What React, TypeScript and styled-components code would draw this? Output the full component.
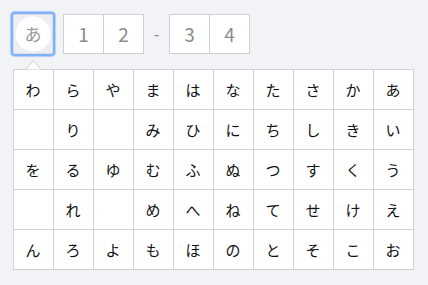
import React from "react";
import styled, { createGlobalStyle } from "styled-components";

const Global = createGlobalStyle`
  html, body { margin: 0; padding: 0; background: #f2f3f7; }
  body { font-family: "Noto Sans CJK JP", "Noto Sans", sans-serif; }
`;

const Page = styled.div`
  padding: 14px 0 0 13px;
  display: flex;
  flex-direction: column;
  align-items: flex-start;
`;

const TopBar = styled.div`
  display: flex;
  align-items: center;
  height: 40px;
`;

const KanaToggle = styled.button`
  box-sizing: border-box;
  width: 40px;
  height: 40px;
  margin: 0 10px 0 0;
  padding: 0 0 2px 0;
  border: 1px solid #dcdde2;
  border-radius: 2px;
  background: radial-gradient(circle at 50% 50%, #ffffff 0, #ffffff 17px, #eceef3 18px);
  box-shadow: 0 0 0 2px #7db2fb, 0 0 1px 3px rgba(125, 178, 251, 0.6);
  color: #9a9a9a;
  font-family: "Noto Sans CJK JP", sans-serif;
  font-size: 17px;
  display: flex;
  align-items: center;
  justify-content: center;
`;

const Group = styled.div`
  display: flex;
  border-left: 1px solid #cfcfcf;
`;

const NumKey = styled.div`
  box-sizing: border-box;
  width: 40px;
  height: 40px;
  background: #fff;
  border: 1px solid #cfcfcf;
  border-left: none;
  color: #8c8c8c;
  font-family: "Noto Sans CJK JP", "Noto Sans", sans-serif;
  font-weight: 400;
  font-size: 19px;
  display: flex;
  align-items: center;
  justify-content: center;
  padding-bottom: 1px;
`;

const Dash = styled.span`
  width: 25px;
  text-align: center;
  color: #8a8a8a;
  font-size: 16px;
  font-family: "Noto Sans", sans-serif;
`;

const Popover = styled.div`
  position: relative;
  margin-top: 15px;
`;

const Arrow = styled.svg`
  position: absolute;
  left: 12px;
  top: -10px;
  width: 17px;
  height: 11px;
`;

const Grid = styled.div`
  display: grid;
  grid-template-columns: repeat(10, 40px);
  grid-auto-rows: 40px;
  border-left: 1px solid #d2d2d2;
  border-top: 1px solid #d2d2d2;
  width: fit-content;
`;

const Cell = styled.div`
  box-sizing: border-box;
  background: #fff;
  border-right: 1px solid #d2d2d2;
  border-bottom: 1px solid #d2d2d2;
  display: flex;
  align-items: center;
  justify-content: center;
  color: #111;
  font-size: 15px;
  font-family: "Noto Sans CJK JP", sans-serif;
  padding-right: 1px;
  padding-bottom: 1px;
`;

const rows = [
  ["わ", "ら", "や", "ま", "は", "な", "た", "さ", "か", "あ"],
  ["", "り", "", "み", "ひ", "に", "ち", "し", "き", "い"],
  ["を", "る", "ゆ", "む", "ふ", "ぬ", "つ", "す", "く", "う"],
  ["", "れ", "", "め", "へ", "ね", "て", "せ", "け", "え"],
  ["ん", "ろ", "よ", "も", "ほ", "の", "と", "そ", "こ", "お"],
];

export default function App() {
  return (
    <>
      <Global />
      <Page>
        <TopBar>
          <KanaToggle>あ</KanaToggle>
          <Group>
            <NumKey>1</NumKey>
            <NumKey>2</NumKey>
          </Group>
          <Dash>-</Dash>
          <Group>
            <NumKey>3</NumKey>
            <NumKey>4</NumKey>
          </Group>
        </TopBar>
        <Popover>
          <Arrow viewBox="0 0 17 11">
            <polygon points="0.5,11 8.5,1.5 16.5,11" fill="#fff" stroke="#cfcfcf" strokeWidth="1" />
          </Arrow>
          <Grid>
            {rows.flat().map((k, i) => (
              <Cell key={i}>{k}</Cell>
            ))}
          </Grid>
        </Popover>
      </Page>
    </>
  );
}
